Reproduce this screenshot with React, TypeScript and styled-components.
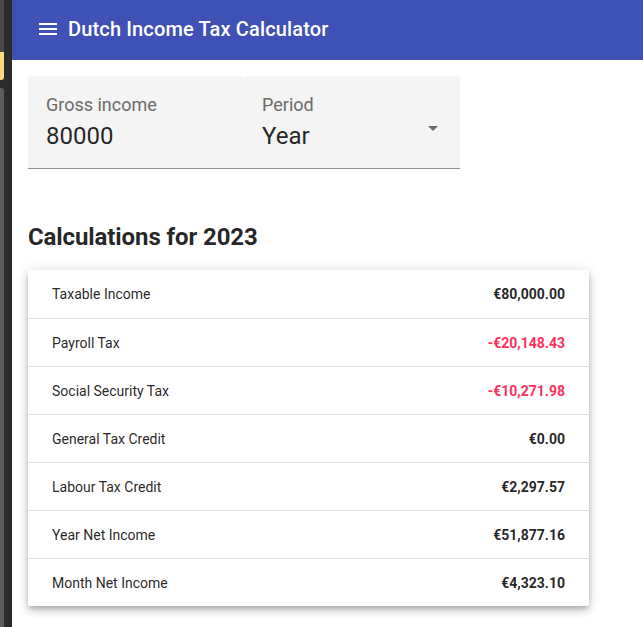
import React from "react";
import styled, { createGlobalStyle } from "styled-components";

const GlobalStyle = createGlobalStyle`
  html, body {
    margin: 0;
    padding: 0;
    background: #ffffff;
    font-family: Roboto, "Liberation Sans", sans-serif;
  }
`;

const Screen = styled.div`
  display: flex;
  width: 643px;
  height: 627px;
  overflow: hidden;
  background: #ffffff;
`;

const WindowEdge = styled.div`
  width: 12px;
  flex: none;
  background: #2b2b2b;
  display: flex;
  flex-direction: column;
  gap: 8px;
`;

const EdgeTab = styled.div`
  width: 4px;
  height: 80px;
  border-radius: 0 0 3px 0;
  background: linear-gradient(to bottom, #4a4a4a 0 52px, #fcd97d 52px 80px);
`;

const EdgeRail = styled.div`
  width: 4px;
  flex: 1;
  border-radius: 0 3px 0 0;
  background: #5c5c5c;
`;

const Main = styled.div`
  flex: 1;
  display: flex;
  flex-direction: column;
  min-width: 0;
`;

const AppBar = styled.header`
  height: 60px;
  flex: none;
  background: #3f51b5;
  color: #ffffff;
  display: flex;
  align-items: center;
  padding: 0 24px 2px;
  gap: 8px;
  box-sizing: border-box;
`;

const Title = styled.h1`
  margin: 0;
  font-size: 20px;
  font-weight: 500;
  letter-spacing: 0.15px;
  line-height: 1.6;
`;

const Content = styled.main`
  padding: 16px;
`;

const FieldRow = styled.div`
  display: flex;
  width: 432px;
  border-bottom: 1px solid #8f8f8f;
`;

const Field = styled.div`
  position: relative;
  flex: 1;
  height: 92px;
  background: #f4f4f4;
  border-radius: 4px 4px 0 0;
  padding: 18px 17px 0 18px;
  box-sizing: border-box;
`;

const FieldLabel = styled.div`
  font-size: 18px;
  line-height: 22px;
  color: #6b6b6b;
`;

const FieldValue = styled.div`
  font-size: 24px;
  line-height: 34px;
  margin-top: 3px;
  color: rgba(0, 0, 0, 0.87);
`;

const ArrowIcon = styled.svg`
  position: absolute;
  right: 15px;
  top: 40px;
  width: 24px;
  height: 24px;
  fill: #6b6b6b;
`;

const Heading = styled.h2`
  margin: 52px 0 0;
  font-size: 24px;
  font-weight: 700;
  line-height: 32px;
  letter-spacing: -0.1px;
  color: rgba(0, 0, 0, 0.87);
`;

const Card = styled.div`
  margin-top: 17px;
  width: 561px;
  background: #ffffff;
  border-radius: 2px;
  box-shadow: 0 3px 5px -1px rgba(0, 0, 0, 0.2), 0 5px 8px 0 rgba(0, 0, 0, 0.14),
    0 1px 14px 0 rgba(0, 0, 0, 0.12);
`;

const Row = styled.div`
  height: 48px;
  box-sizing: border-box;
  display: flex;
  align-items: center;
  justify-content: space-between;
  padding: 0 24px;
  font-size: 14px;
  color: rgba(0, 0, 0, 0.87);
  & + & {
    border-top: 1px solid #e0e0e0;
  }
`;

const Amount = styled.span<{ $negative?: boolean }>`
  font-weight: 700;
  color: ${({ $negative }) => ($negative ? "#ff2f5a" : "rgba(0, 0, 0, 0.87)")};
`;

const rows = [
  { label: "Taxable Income", value: "€80,000.00" },
  { label: "Payroll Tax", value: "-€20,148.43", negative: true },
  { label: "Social Security Tax", value: "-€10,271.98", negative: true },
  { label: "General Tax Credit", value: "€0.00" },
  { label: "Labour Tax Credit", value: "€2,297.57" },
  { label: "Year Net Income", value: "€51,877.16" },
  { label: "Month Net Income", value: "€4,323.10" },
];

export default function App() {
  return (
    <>
      <GlobalStyle />
      <Screen>
        <WindowEdge>
          <EdgeTab />
          <EdgeRail />
        </WindowEdge>
        <Main>
          <AppBar>
            <svg width="24" height="24" viewBox="0 0 24 24" fill="#ffffff">
              <path d="M3 18h18v-2H3v2zm0-5h18v-2H3v2zm0-7v2h18V6H3z" />
            </svg>
            <Title>Dutch Income Tax Calculator</Title>
          </AppBar>
          <Content>
            <FieldRow>
              <Field>
                <FieldLabel>Gross income</FieldLabel>
                <FieldValue>80000</FieldValue>
              </Field>
              <Field>
                <FieldLabel>Period</FieldLabel>
                <FieldValue>Year</FieldValue>
                <ArrowIcon viewBox="0 0 24 24">
                  <path d="M7 10l5 5 5-5z" />
                </ArrowIcon>
              </Field>
            </FieldRow>
            <Heading>Calculations for 2023</Heading>
            <Card>
              {rows.map((r) => (
                <Row key={r.label}>
                  <span>{r.label}</span>
                  <Amount $negative={r.negative}>{r.value}</Amount>
                </Row>
              ))}
            </Card>
          </Content>
        </Main>
      </Screen>
    </>
  );
}
